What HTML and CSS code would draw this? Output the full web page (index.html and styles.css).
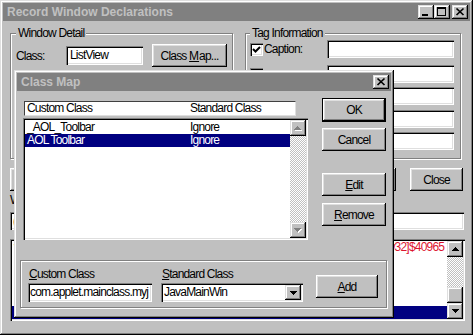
FILE: index.html
```html
<!DOCTYPE html>
<html lang="en">

<head>
    <meta charset="UTF-8">
    <meta name="viewport" content="width=device-width, initial-scale=1.0">
    <title>Record Window Declarations</title>
    <link rel="stylesheet" href="styles.css">
</head>

<body>
    <div class="desktop">
        <div class="window window_main">
            <div class="titlebar">
                <span class="titlebar_text">Record Window Declarations</span>
                <span class="caption_btn"><svg width="16" height="14"><rect x="4" y="9" width="6" height="2" /></svg></span>
                <span class="caption_btn"><svg width="16" height="14"><path d="M3 2h9v9H3z M4 4v6h7V4z" fill-rule="evenodd" /></svg></span>
                <span class="caption_btn caption_btn_close"><svg width="16" height="14"><path d="M4.5 3.5l7 6.5M11.5 3.5l-7 6.5" stroke="#000" stroke-width="1.7" /></svg></span>
            </div>
            <div class="main_body">
                <div class="top_groups">
                    <fieldset class="group group_detail">
                        <legend>Window Detail</legend>
                        <div class="detail_row">
                            <span class="detail_label">Class:</span>
                            <div class="field field_class">ListView</div>
                            <button class="btn btn_classmap">Class <u>M</u>ap...</button>
                        </div>
                        <!-- rest of the detail rows sit under the Class Map dialog -->
                        <div class="detail_row detail_row_last">
                            <span class="detail_label"></span>
                            <div class="field field_ident"></div>
                        </div>
                    </fieldset>
                    <fieldset class="group group_tags">
                        <legend>Tag Information</legend>
                        <div class="tag_row">
                            <span class="checkbox"><svg width="9" height="9"><path d="M1 4l2.5 2.5L8 2" stroke="#000" stroke-width="2" fill="none" /></svg></span>
                            <span class="tag_label">Caption:</span>
                            <div class="field field_tag"></div>
                        </div>
                        <div class="tag_row tag_row_second">
                            <span class="checkbox"></span>
                            <span class="tag_label"></span>
                            <div class="field field_tag"></div>
                        </div>
                        <div class="tag_row tag_row_third">
                            <span class="checkbox"></span>
                            <span class="tag_label"></span>
                            <div class="field field_tag"></div>
                        </div>
                        <div class="tag_row">
                            <span class="checkbox"></span>
                            <span class="tag_label"></span>
                            <div class="field field_tag"></div>
                        </div>
                        <div class="tag_row tag_row_last">
                            <span class="checkbox"></span>
                            <span class="tag_label"></span>
                            <div class="field field_tag"></div>
                        </div>
                    </fieldset>
                </div>

                <div class="action_row">
                    <button class="btn btn_pause"></button>
                    <button class="btn btn_paste"></button>
                    <button class="btn btn_copy"></button>
                    <button class="btn btn_close">Close</button>
                </div>

                <label class="decl_label">Window Declaration:</label>
                <div class="field field_decl">(ListView) AOLToolbar</div>

                <div class="listbox decl_list">
                    <div class="list_rows">
                        <div class="decl_row decl_row_tag">window ListView AOLToolbar                     tag "[ListView]AOL Toolbar|#1|[SysListView32]$40965</div>
                        <div class="decl_row"></div>
                        <div class="decl_row"></div>
                        <div class="decl_row"></div>
                        <div class="decl_row"></div>
                        <div class="decl_row selected"></div>
                    </div>
                    <div class="scrollbar">
                        <span class="scroll_btn"><svg width="7" height="4"><path d="M3 0h1v1h1v1h1v1h1v1H0V3h1V2h1V1h1z" /></svg></span>
                        <span class="scroll_track scroll_track_thumb"><span class="scroll_thumb"></span></span>
                        <span class="scroll_btn"><svg width="7" height="4"><path d="M0 0h7v1H6v1H5v1H4v1H3V3H2V2H1V1H0z" /></svg></span>
                    </div>
                </div>
            </div>
        </div>

        <div class="window window_dialog">
            <div class="titlebar">
                <span class="titlebar_text">Class Map</span>
                <span class="caption_btn"><svg width="16" height="14"><path d="M4.5 3.5l7 6.5M11.5 3.5l-7 6.5" stroke="#000" stroke-width="1.7" /></svg></span>
            </div>
            <div class="dialog_body">
                <div class="map_area">
                    <div class="map_header">
                        <span class="map_col">Custom Class</span>
                        <span>Standard Class</span>
                    </div>
                    <div class="listbox map_list">
                        <div class="list_rows map_rows">
                            <div class="map_row"><span class="map_col">_AOL_Toolbar</span><span>Ignore</span></div>
                            <div class="map_row selected"><span class="map_col">AOL Toolbar</span><span>Ignore</span></div>
                        </div>
                        <div class="scrollbar">
                            <span class="scroll_btn"><svg width="8" height="5"><path fill="#fff" d="M4 1h1v1h1v1h1v1h1v1H1V4h1V3h1V2h1z" /><path fill="#808080" d="M3 0h1v1h1v1h1v1h1v1H0V3h1V2h1V1h1z" /></svg></span>
                            <span class="scroll_track"></span>
                            <span class="scroll_btn"><svg width="8" height="5"><path fill="#fff" d="M1 1h7v1H7v1H6v1H5v1H4V4H3V3H2V2H1z" /><path fill="#808080" d="M0 0h7v1H6v1H5v1H4v1H3V3H2V2H1V1H0z" /></svg></span>
                        </div>
                    </div>
                </div>
                <div class="map_buttons">
                    <button class="btn btn_default">OK</button>
                    <button class="btn btn_cancel">Cancel</button>
                    <button class="btn btn_edit mnemonic">Edit</button>
                    <button class="btn btn_remove mnemonic">Remove</button>
                </div>
                <div class="etched map_entry">
                    <div class="entry_col entry_custom">
                        <label class="mnemonic">Custom Class</label>
                        <div class="field field_entry">com.applet.mainclass.myj</div>
                    </div>
                    <div class="entry_col entry_standard">
                        <label class="mnemonic">Standard Class</label>
                        <div class="field combo">
                            <span class="combo_text">JavaMainWin</span>
                            <span class="combo_btn"><svg width="7" height="4"><path d="M0 0h7v1H6v1H5v1H4v1H3V3H2V2H1V1H0z" /></svg></span>
                        </div>
                    </div>
                    <button class="btn btn_add mnemonic">Add</button>
                </div>
            </div>
        </div>
    </div>
</body>

</html>
```

FILE: styles.css
```css
* {
    box-sizing: border-box;
}

body {
    margin: 0;
    background: #c0c0c0;
    font-family: "Liberation Sans", Arial, sans-serif;
    font-size: 12px;
    letter-spacing: -0.8px;
    color: #000;
}

u {
    letter-spacing: 0;
}

.mnemonic::first-letter {
    text-decoration: underline;
}

.desktop {
    position: relative;
    width: 473px;
    height: 335px;
    overflow: hidden;
}

/* windows */

.window {
    display: flex;
    flex-direction: column;
    padding: 3px;
    background: #c0c0c0;
    box-shadow: inset -1px -1px #000, inset 1px 1px #dfdfdf, inset -2px -2px #808080, inset 2px 2px #fff;
}

.window_main {
    width: 473px;
    height: 335px;
}

.window_dialog {
    position: absolute;
    left: 14px;
    top: 70px;
    width: 380px;
    height: 248px;
}

.titlebar {
    display: flex;
    align-items: center;
    flex-shrink: 0;
    height: 18px;
    padding: 0 2px 0 4px;
    background: #808080;
    color: #c0c0c0;
}

.titlebar_text {
    flex: 1;
    font-weight: bold;
    letter-spacing: 0;
}

.caption_btn,
.scroll_btn,
.combo_btn,
.scroll_thumb {
    display: flex;
    align-items: center;
    justify-content: center;
    flex-shrink: 0;
    background: #c0c0c0;
    box-shadow: inset -1px -1px #000, inset 1px 1px #dfdfdf, inset -2px -2px #808080, inset 2px 2px #fff;
}

.caption_btn {
    width: 16px;
    height: 14px;
}

.caption_btn svg {
    display: block;
}

.caption_btn_close {
    margin-left: 2px;
}

/* controls */

.btn {
    height: 23px;
    padding: 0;
    border: 0;
    background: #c0c0c0;
    box-shadow: inset -1px -1px #000, inset 1px 1px #fff, inset -2px -2px #808080, inset 2px 2px #dfdfdf;
    font: inherit;
    letter-spacing: inherit;
    color: #000;
    white-space: nowrap;
}

.btn_default {
    height: 24px;
    box-shadow: inset 0 0 0 1px #000, inset -2px -2px #000, inset 2px 2px #fff, inset -3px -3px #808080, inset 3px 3px #dfdfdf;
}

.field,
.listbox,
.checkbox {
    background: #fff;
    box-shadow: inset 1px 1px #808080, inset 2px 2px #000, inset -1px -1px #fff, inset -2px -2px #dfdfdf;
}

.field {
    height: 19px;
    padding: 0 2px 0 4px;
    line-height: 19px;
    white-space: nowrap;
    overflow: hidden;
}

.checkbox {
    display: flex;
    align-items: center;
    justify-content: center;
    width: 13px;
    height: 13px;
    flex-shrink: 0;
}

.listbox {
    display: flex;
    padding: 2px;
}

.list_rows {
    flex: 1;
    min-width: 0;
    overflow: hidden;
}

.selected {
    background: #000080;
    color: #fff;
}

.scrollbar {
    display: flex;
    flex-direction: column;
    width: 16px;
}

.scroll_btn {
    height: 16px;
}

.scroll_track {
    flex: 1;
    background-color: #fff;
    background-image: conic-gradient(#c0c0c0 25%, transparent 0 50%, #c0c0c0 0 75%, transparent 0);
    background-size: 2px 2px;
}

.scroll_track_thumb {
    display: flex;
    flex-direction: column;
    justify-content: flex-end;
}

.scroll_thumb {
    height: 16px;
}

.group {
    margin: 0;
    min-width: 0;
    border: 1px solid #808080;
    box-shadow: 1px 1px 0 #fff, inset 1px 1px 0 #fff;
}

.group legend {
    padding: 0 2px;
    line-height: 12px;
    background: #c0c0c0;
}

.etched {
    border: 1px solid #808080;
    box-shadow: 1px 1px 0 #fff, inset 1px 1px 0 #fff;
}

/* record window */

.main_body {
    flex: 1;
    display: flex;
    flex-direction: column;
    padding: 6px 5px 0 7px;
}

.top_groups {
    display: flex;
    gap: 12px;
}

.group_detail {
    width: 223px;
    padding: 1px 4px 7px 5px;
}

.group_tags {
    width: 216px;
    padding: 1px 6px 6px 4px;
}

.detail_row {
    display: flex;
    align-items: center;
    height: 23px;
    margin-top: 4px;
}

.detail_row_last {
    height: 19px;
    margin-top: 65px;
}

.detail_label {
    width: 50px;
    flex-shrink: 0;
}

.field_class {
    width: 77px;
    margin-right: 9px;
}

.field_ident {
    width: 150px;
}

.btn_classmap {
    width: 75px;
}

.tag_row {
    display: flex;
    align-items: center;
    height: 18px;
}

.tag_row + .tag_row {
    margin-top: 5px;
}

.tag_row.tag_row_second {
    margin-top: 7px;
}

.tag_row.tag_row_third {
    margin-top: 4px;
}

.tag_row.tag_row_last {
    margin-top: 4px;
}

.tag_label {
    flex: 1;
    padding-left: 1px;
}

.field_tag {
    width: 127px;
    height: 18px;
}

.action_row {
    display: flex;
    margin-top: 9px;
}

.btn_pause {
    width: 100px;
}

.btn_paste {
    width: 100px;
    margin-left: auto;
}

.btn_copy {
    width: 100px;
    margin-left: 8px;
}

.btn_close {
    width: 53px;
    margin: 0 2px 0 14px;
}

.decl_label {
    margin-top: 2px;
    line-height: 14px;
}

.field_decl {
    height: 18px;
    margin: 5px 1px 0 0;
    line-height: 18px;
    padding-left: 3px;
}

.decl_list {
    height: 82px;
    margin-top: 9px;
}

.decl_row {
    height: 13px;
    padding-left: 2px;
    line-height: 13px;
    white-space: pre;
    overflow: hidden;
}

.decl_row_tag {
    color: #dc1530;
}

/* class map dialog */

.dialog_body {
    display: grid;
    grid-template-columns: 285px 64px;
    column-gap: 14px;
    align-items: start;
    padding: 7px 0 0 6px;
}

.map_header {
    display: flex;
    width: 272px;
    height: 15px;
    margin: 3px 0 0 1px;
    padding-left: 2px;
    line-height: 13px;
    background: #fff;
    border-top: 1px solid #404040;
    border-left: 1px solid #404040;
    border-bottom: 1px solid #dfdfdf;
    border-right: 1px solid #dfdfdf;
}

.map_col {
    width: 163px;
    flex-shrink: 0;
}

.map_list {
    height: 122px;
    margin-top: 2px;
}

.map_rows {
    padding-top: 1px;
}

.map_row {
    display: flex;
    height: 13px;
    padding-left: 2px;
    line-height: 12px;
    white-space: nowrap;
}

.map_buttons {
    display: flex;
    flex-direction: column;
}

.map_buttons .btn {
    width: 64px;
}

.btn_cancel {
    margin-top: 6px;
}

.btn_edit {
    margin-top: 22px;
}

.btn_remove {
    margin-top: 7px;
}

.map_entry {
    grid-column: 1 / -1;
    display: flex;
    align-items: flex-end;
    width: 367px;
    height: 48px;
    margin: 20px 0 0 -3px;
    padding: 0 0 5px 7px;
}

.entry_col {
    display: flex;
    flex-direction: column;
}

.entry_col label {
    padding-left: 1px;
    line-height: 14px;
}

.entry_col .field {
    margin-top: 2px;
}

.entry_custom {
    width: 124px;
}

.entry_standard {
    width: 142px;
    margin-left: 9px;
}

.field_entry {
    padding: 0 1px 0 2px;
}

.combo {
    display: flex;
    align-items: center;
    padding: 2px;
}

.combo_text {
    flex: 1;
    padding-left: 1px;
    line-height: 15px;
}

.combo_btn {
    width: 16px;
    height: 15px;
}

.btn_add {
    width: 62px;
    margin: 0 0 4px 13px;
}
```
